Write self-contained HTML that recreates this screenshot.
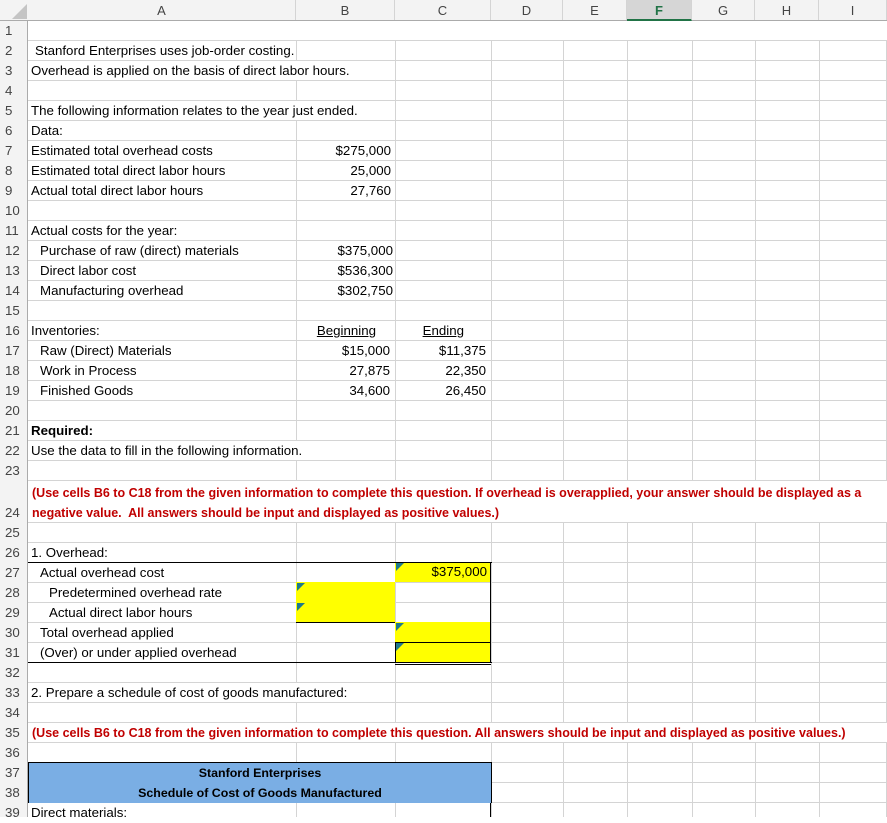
<!DOCTYPE html>
<html><head><meta charset="utf-8"><style>
*{margin:0;padding:0;box-sizing:border-box}
body{width:887px;height:817px;overflow:hidden;background:#fff;position:relative;font-family:"Liberation Sans",Arial,sans-serif;font-size:13.3px;color:#000}
div{position:absolute}
.t{height:20px;line-height:20px;white-space:nowrap}
.w{background:#fff}
.r{text-align:right}
.rn{left:0;width:28px;padding-left:5px;color:#444;font-size:13.3px;height:20px;line-height:20px}
.v{width:1px;background:#d4d4d4;top:21px;height:796px}
.ch{top:0;height:20px;line-height:21px;text-align:center;color:#444;font-size:13px;border-right:1px solid #d4d4d4}
.y{background:#ffff00}
.tri{width:0;height:0;border-top:8px solid #1f7a8c;border-right:8px solid transparent}
.red{color:#c00000;font-weight:bold}
</style></head><body>
<div style="left:0;top:0;width:887px;height:21px;background:#f3f3f3;border-bottom:1px solid #ababab"></div>
<div style="left:0;top:21px;width:28px;height:796px;background:#f3f3f3;border-right:1px solid #ababab"></div>
<div style="left:12px;top:4px;width:0;height:0;border-left:15px solid transparent;border-bottom:15px solid #c4c4c4"></div>
<div class="ch" style="left:28px;width:268px">A</div>
<div class="ch" style="left:296px;width:99px">B</div>
<div class="ch" style="left:395px;width:96px">C</div>
<div class="ch" style="left:491px;width:72px">D</div>
<div class="ch" style="left:563px;width:64px">E</div>
<div class="ch" style="left:627px;width:65px;background:#d6d6d6;color:#217346;font-weight:bold;border-bottom:2px solid #217346;height:21px">F</div>
<div class="ch" style="left:692px;width:63px">G</div>
<div class="ch" style="left:755px;width:64px">H</div>
<div class="ch" style="left:819px;width:68px">I</div>
<div style="left:28px;top:21px;width:859px;height:460px;background:repeating-linear-gradient(to bottom,transparent 0,transparent 19px,#d4d4d4 19px,#d4d4d4 20px)"></div>
<div style="left:28px;top:523px;width:859px;height:294px;background:repeating-linear-gradient(to bottom,transparent 0,transparent 19px,#d4d4d4 19px,#d4d4d4 20px)"></div>
<div style="left:28px;top:522px;width:859px;height:1px;background:#d4d4d4"></div>
<div class="v" style="left:296px"></div><div class="v" style="left:395px"></div><div class="v" style="left:491px"></div><div class="v" style="left:563px"></div><div class="v" style="left:627px"></div><div class="v" style="left:692px"></div><div class="v" style="left:755px"></div><div class="v" style="left:819px"></div><div class="v" style="left:886px"></div>
<div style="left:29px;top:21px;width:858px;height:19px;background:#fff"></div>
<div class="rn" style="top:21px">1</div><div class="rn" style="top:41px">2</div><div class="rn" style="top:61px">3</div><div class="rn" style="top:81px">4</div><div class="rn" style="top:101px">5</div><div class="rn" style="top:121px">6</div><div class="rn" style="top:141px">7</div><div class="rn" style="top:161px">8</div><div class="rn" style="top:181px">9</div><div class="rn" style="top:201px">10</div><div class="rn" style="top:221px">11</div><div class="rn" style="top:241px">12</div><div class="rn" style="top:261px">13</div><div class="rn" style="top:281px">14</div><div class="rn" style="top:301px">15</div><div class="rn" style="top:321px">16</div><div class="rn" style="top:341px">17</div><div class="rn" style="top:361px">18</div><div class="rn" style="top:381px">19</div><div class="rn" style="top:401px">20</div><div class="rn" style="top:421px">21</div><div class="rn" style="top:441px">22</div><div class="rn" style="top:461px">23</div><div class="rn" style="top:503px">24</div><div class="rn" style="top:523px">25</div><div class="rn" style="top:543px">26</div><div class="rn" style="top:563px">27</div><div class="rn" style="top:583px">28</div><div class="rn" style="top:603px">29</div><div class="rn" style="top:623px">30</div><div class="rn" style="top:643px">31</div><div class="rn" style="top:663px">32</div><div class="rn" style="top:683px">33</div><div class="rn" style="top:703px">34</div><div class="rn" style="top:723px">35</div><div class="rn" style="top:743px">36</div><div class="rn" style="top:763px">37</div><div class="rn" style="top:783px">38</div><div class="rn" style="top:803px">39</div>
<div class="t" style="left:35px;top:41px">Stanford Enterprises uses job-order costing.</div>
<div class="t w" style="left:31px;top:61px;height:19px;padding-right:3px">Overhead is applied on the basis of direct labor hours.</div>
<div class="t w" style="left:31px;top:101px;height:19px;padding-right:4px">The following information relates to the year just ended.</div>
<div class="t" style="left:31px;top:121px">Data:</div>
<div class="t" style="left:31px;top:141px">Estimated total overhead costs</div>
<div class="t" style="left:31px;top:161px">Estimated total direct labor hours</div>
<div class="t" style="left:31px;top:181px">Actual total direct labor hours</div>
<div class="t r" style="left:296px;width:95px;top:141px">$275,000</div>
<div class="t r" style="left:296px;width:95px;top:161px">25,000</div>
<div class="t r" style="left:296px;width:95px;top:181px">27,760</div>
<div class="t" style="left:31px;top:221px">Actual costs for the year:</div>
<div class="t" style="left:40px;top:241px">Purchase of raw (direct) materials</div>
<div class="t" style="left:40px;top:261px">Direct labor cost</div>
<div class="t" style="left:40px;top:281px">Manufacturing overhead</div>
<div class="t r" style="left:296px;width:97px;top:241px">$375,000</div>
<div class="t r" style="left:296px;width:97px;top:261px">$536,300</div>
<div class="t r" style="left:296px;width:97px;top:281px">$302,750</div>
<div class="t" style="left:31px;top:321px">Inventories:</div>
<div class="t" style="left:40px;top:341px">Raw (Direct) Materials</div>
<div class="t" style="left:40px;top:361px">Work in Process</div>
<div class="t" style="left:40px;top:381px">Finished Goods</div>
<div class="t r" style="left:296px;width:80px;top:321px;text-decoration:underline">Beginning</div>
<div class="t r" style="left:296px;width:94px;top:341px">$15,000</div>
<div class="t r" style="left:296px;width:94px;top:361px">27,875</div>
<div class="t r" style="left:296px;width:94px;top:381px">34,600</div>
<div class="t r" style="left:395px;width:69px;top:321px;text-decoration:underline">Ending</div>
<div class="t r" style="left:395px;width:91px;top:341px">$11,375</div>
<div class="t r" style="left:395px;width:91px;top:361px">22,350</div>
<div class="t r" style="left:395px;width:91px;top:381px">26,450</div>
<div class="t" style="left:31px;top:421px;font-weight:bold">Required:</div>
<div class="t w" style="left:31px;top:441px;height:19px;padding-right:3px">Use the data to fill in the following information.</div>
<div class="w red" style="left:29px;top:481px;width:858px;height:41px;padding:2px 0 0 3px;line-height:20px;font-size:12.5px">(Use cells B6 to C18 from the given information to complete this question. If overhead is overapplied, your answer should be displayed as a<br>negative value.&nbsp; All answers should be input and displayed as positive values.)</div>
<div class="t" style="left:31px;top:543px">1. Overhead:</div>
<div class="t" style="left:40px;top:563px">Actual overhead cost</div>
<div class="t" style="left:49px;top:583px">Predetermined overhead rate</div>
<div class="t" style="left:49px;top:603px">Actual direct labor hours</div>
<div class="t" style="left:40px;top:623px">Total overhead applied</div>
<div class="t" style="left:40px;top:643px">(Over) or under applied overhead</div>
<div class="y" style="left:296px;top:582px;width:99px;height:40px"></div>
<div class="tri" style="left:297px;top:583px"></div><div class="tri" style="left:297px;top:603px"></div>
<div class="y" style="left:395px;top:563px;width:96px;height:19px"></div>
<div class="t r" style="left:395px;width:92px;top:562px">$375,000</div>
<div class="y" style="left:395px;top:622px;width:96px;height:20px"></div>
<div class="y" style="left:395px;top:642px;width:96px;height:20px"></div>
<div class="tri" style="left:396px;top:563px"></div><div class="tri" style="left:396px;top:623px"></div><div class="tri" style="left:396px;top:643px"></div>
<div style="left:28px;top:562px;width:464px;height:1px;background:#000"></div>
<div style="left:490px;top:562px;width:1px;height:101px;background:#000"></div>
<div style="left:296px;top:622px;width:99px;height:1px;background:#000"></div>
<div style="left:395px;top:642px;width:96px;height:1px;background:#000"></div>
<div style="left:395px;top:642px;width:1px;height:20px;background:#000"></div>
<div style="left:28px;top:662px;width:464px;height:1px;background:#000"></div>
<div style="left:395px;top:664px;width:96px;height:1px;background:#000"></div>
<div class="t w" style="left:31px;top:683px;height:19px;padding-right:3px">2. Prepare a schedule of cost of goods manufactured:</div>
<div class="t w red" style="left:29px;top:723px;height:19px;width:858px;padding-left:3px;font-size:12.5px">(Use cells B6 to C18 from the given information to complete this question. All answers should be input and displayed as positive values.)</div>
<div style="left:28px;top:762px;width:464px;height:41px;background:#7aaee4;border:1px solid #000;border-bottom:none"></div>
<div class="t" style="left:28px;width:464px;top:763px;text-align:center;font-weight:bold;font-size:12.4px">Stanford Enterprises</div>
<div class="t" style="left:28px;width:464px;top:783px;text-align:center;font-weight:bold;font-size:12.4px">Schedule of Cost of Goods Manufactured</div>
<div style="left:490px;top:803px;width:1px;height:14px;background:#000"></div>
<div class="t" style="left:31px;top:803px">Direct materials:</div>
</body></html>
